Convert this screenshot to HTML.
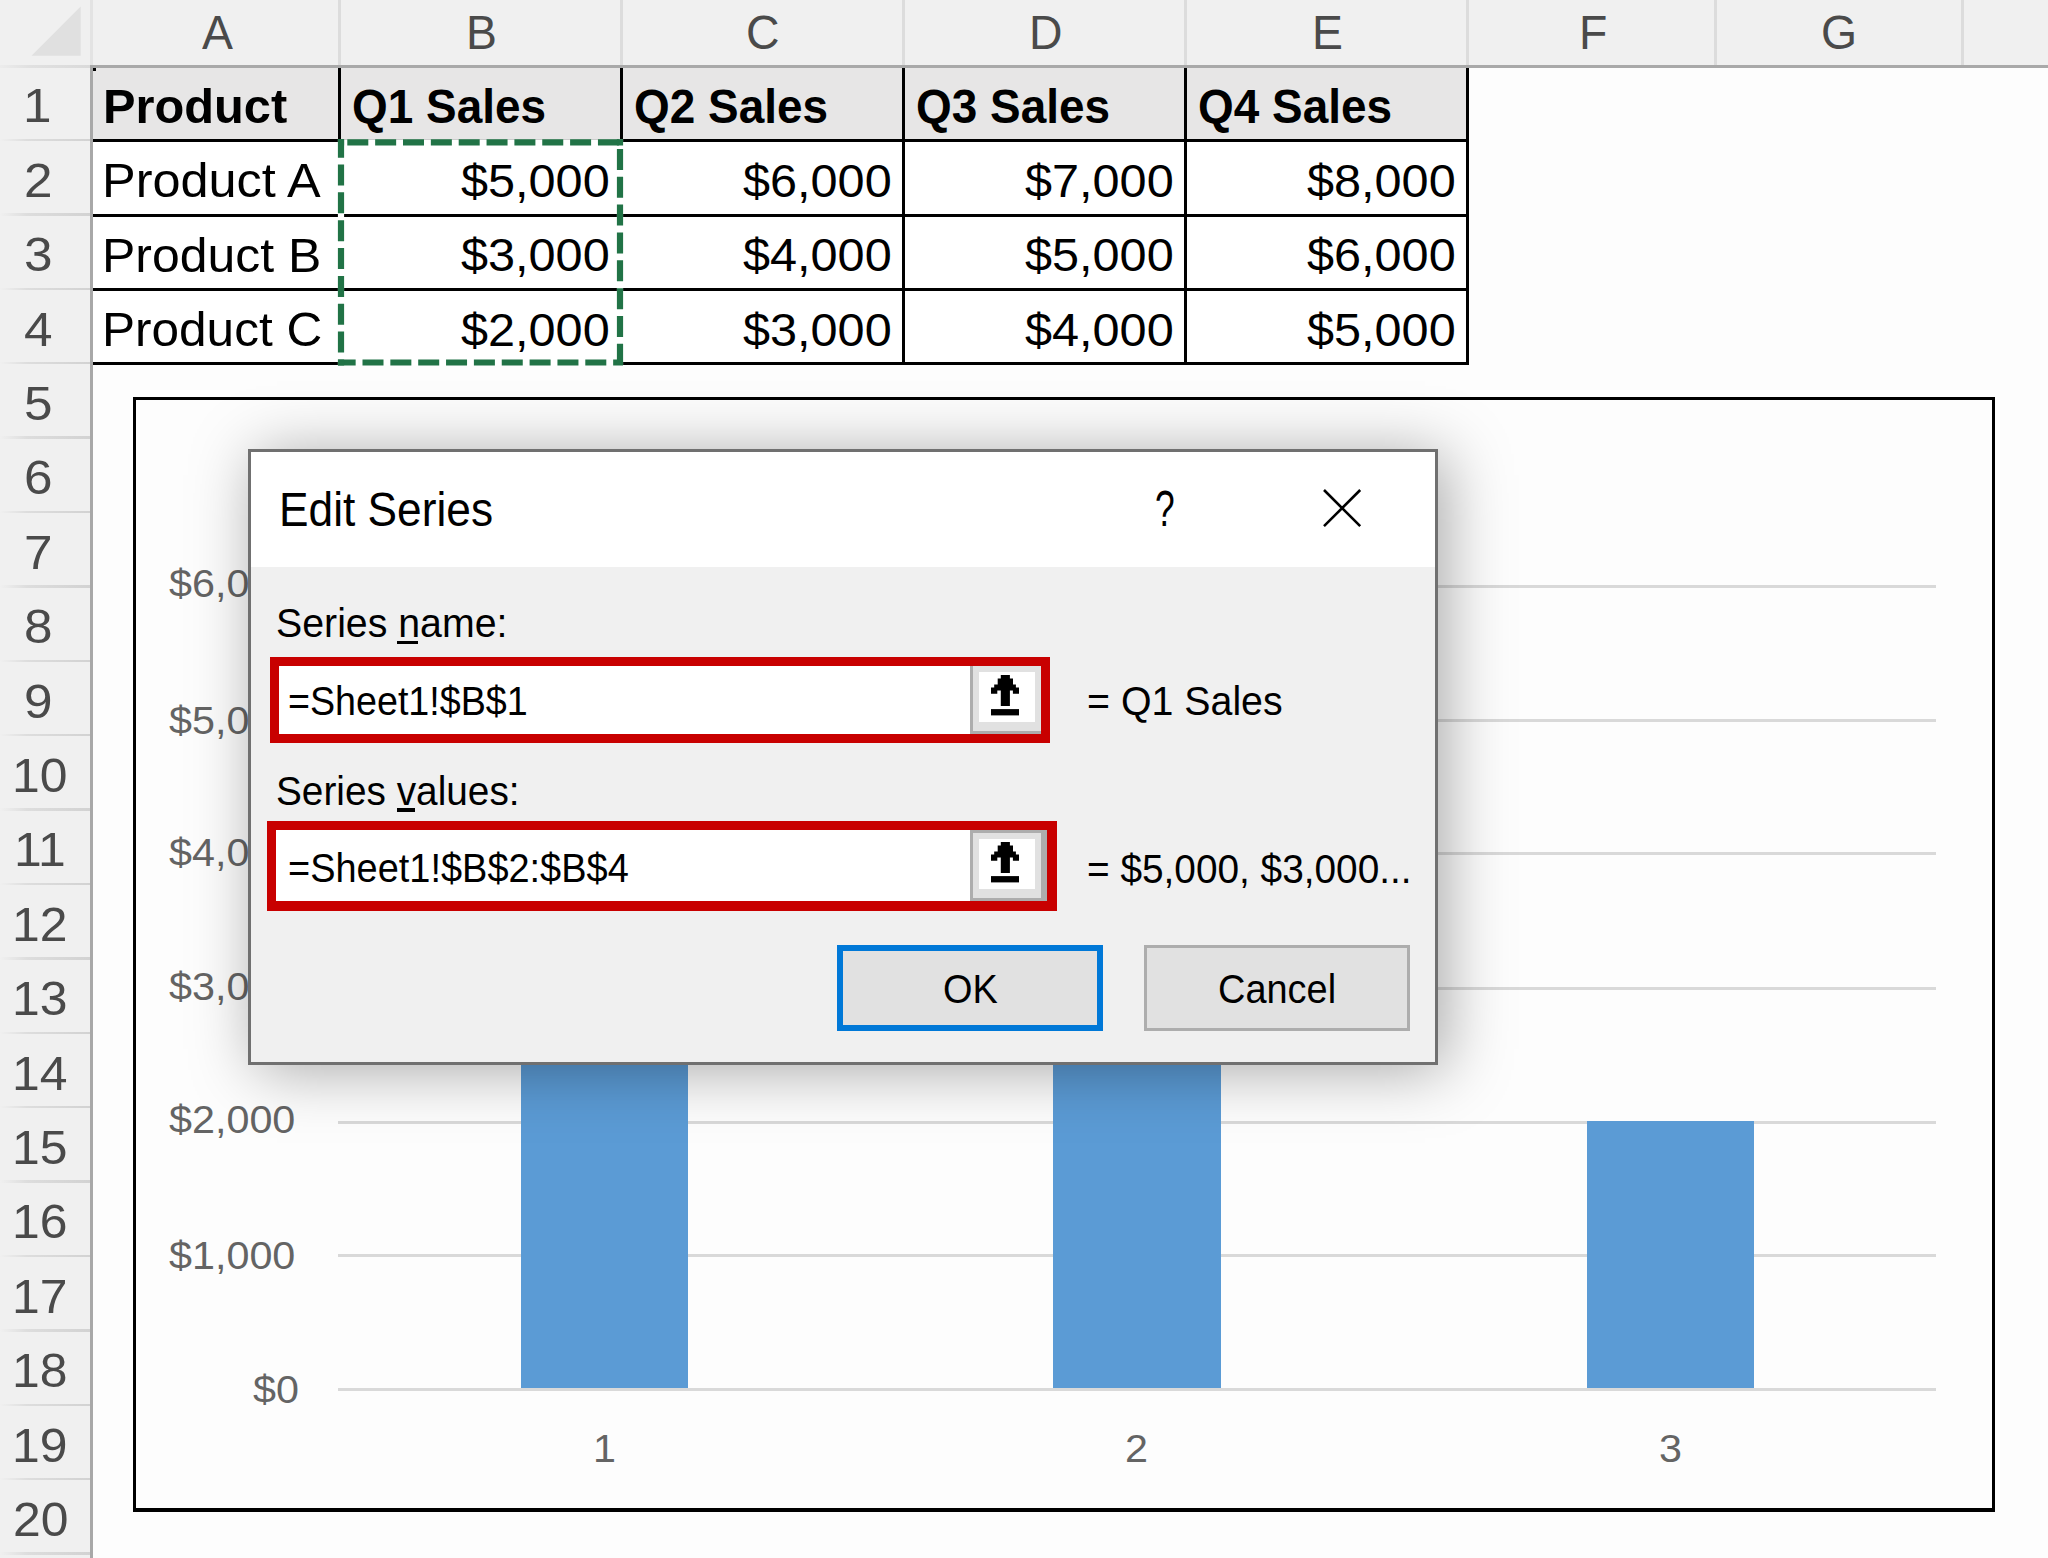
<!DOCTYPE html>
<html><head><meta charset="utf-8"><title>Edit Series</title>
<style>
html,body{margin:0;padding:0;}
body{width:2048px;height:1558px;position:relative;overflow:hidden;background:#fdfdfd;font-family:"Liberation Sans",sans-serif;}
div,span,svg{position:absolute;box-sizing:content-box;}
span{line-height:1;white-space:pre;transform-origin:0 0;}
#dlg{left:248px;top:449px;width:1189.7px;height:616px;background:#707070;overflow:hidden;}
#dlgshadow{left:248px;top:449px;width:1189.7px;height:616px;box-shadow:8px 5px 60px rgba(0,0,0,0.34);}
#chartclip{left:136.5px;top:400px;width:1855.5px;height:1108.5px;overflow:hidden;}
</style></head><body>
<div style="left:0.00px;top:0.00px;width:2048.00px;height:67.00px;background:#f0f0f0;"></div>
<div style="left:0.00px;top:0.00px;width:91.00px;height:1558.00px;background:#f0f0f0;"></div>
<svg style="left:0;top:0" width="92" height="66"><polygon points="80.7,6.5 80.7,55.7 31.5,55.7" fill="#e0e0e0"/></svg>
<div style="left:338.30px;top:0.00px;width:2.40px;height:66.00px;background:#dcdcdc;"></div>
<div style="left:620.30px;top:0.00px;width:2.40px;height:66.00px;background:#dcdcdc;"></div>
<div style="left:902.30px;top:0.00px;width:2.40px;height:66.00px;background:#dcdcdc;"></div>
<div style="left:1184.30px;top:0.00px;width:2.40px;height:66.00px;background:#dcdcdc;"></div>
<div style="left:1466.30px;top:0.00px;width:2.40px;height:66.00px;background:#dcdcdc;"></div>
<div style="left:1714.30px;top:0.00px;width:2.40px;height:66.00px;background:#dcdcdc;"></div>
<div style="left:1961.30px;top:0.00px;width:2.40px;height:66.00px;background:#dcdcdc;"></div>
<div style="left:90.00px;top:0.00px;width:2.90px;height:65.00px;background:#e3e3e3;"></div>
<div style="left:0.00px;top:138.70px;width:90.00px;height:2.60px;background:linear-gradient(90deg,#f0f0f0 0%,#dddddd 30%,#d2d2d2 100%);"></div>
<div style="left:0.00px;top:213.10px;width:90.00px;height:2.60px;background:linear-gradient(90deg,#f0f0f0 0%,#dddddd 30%,#d2d2d2 100%);"></div>
<div style="left:0.00px;top:287.50px;width:90.00px;height:2.60px;background:linear-gradient(90deg,#f0f0f0 0%,#dddddd 30%,#d2d2d2 100%);"></div>
<div style="left:0.00px;top:361.90px;width:90.00px;height:2.60px;background:linear-gradient(90deg,#f0f0f0 0%,#dddddd 30%,#d2d2d2 100%);"></div>
<div style="left:0.00px;top:436.30px;width:90.00px;height:2.60px;background:linear-gradient(90deg,#f0f0f0 0%,#dddddd 30%,#d2d2d2 100%);"></div>
<div style="left:0.00px;top:510.70px;width:90.00px;height:2.60px;background:linear-gradient(90deg,#f0f0f0 0%,#dddddd 30%,#d2d2d2 100%);"></div>
<div style="left:0.00px;top:585.10px;width:90.00px;height:2.60px;background:linear-gradient(90deg,#f0f0f0 0%,#dddddd 30%,#d2d2d2 100%);"></div>
<div style="left:0.00px;top:659.50px;width:90.00px;height:2.60px;background:linear-gradient(90deg,#f0f0f0 0%,#dddddd 30%,#d2d2d2 100%);"></div>
<div style="left:0.00px;top:733.90px;width:90.00px;height:2.60px;background:linear-gradient(90deg,#f0f0f0 0%,#dddddd 30%,#d2d2d2 100%);"></div>
<div style="left:0.00px;top:808.30px;width:90.00px;height:2.60px;background:linear-gradient(90deg,#f0f0f0 0%,#dddddd 30%,#d2d2d2 100%);"></div>
<div style="left:0.00px;top:882.70px;width:90.00px;height:2.60px;background:linear-gradient(90deg,#f0f0f0 0%,#dddddd 30%,#d2d2d2 100%);"></div>
<div style="left:0.00px;top:957.10px;width:90.00px;height:2.60px;background:linear-gradient(90deg,#f0f0f0 0%,#dddddd 30%,#d2d2d2 100%);"></div>
<div style="left:0.00px;top:1031.50px;width:90.00px;height:2.60px;background:linear-gradient(90deg,#f0f0f0 0%,#dddddd 30%,#d2d2d2 100%);"></div>
<div style="left:0.00px;top:1105.90px;width:90.00px;height:2.60px;background:linear-gradient(90deg,#f0f0f0 0%,#dddddd 30%,#d2d2d2 100%);"></div>
<div style="left:0.00px;top:1180.30px;width:90.00px;height:2.60px;background:linear-gradient(90deg,#f0f0f0 0%,#dddddd 30%,#d2d2d2 100%);"></div>
<div style="left:0.00px;top:1254.70px;width:90.00px;height:2.60px;background:linear-gradient(90deg,#f0f0f0 0%,#dddddd 30%,#d2d2d2 100%);"></div>
<div style="left:0.00px;top:1329.10px;width:90.00px;height:2.60px;background:linear-gradient(90deg,#f0f0f0 0%,#dddddd 30%,#d2d2d2 100%);"></div>
<div style="left:0.00px;top:1403.50px;width:90.00px;height:2.60px;background:linear-gradient(90deg,#f0f0f0 0%,#dddddd 30%,#d2d2d2 100%);"></div>
<div style="left:0.00px;top:1477.90px;width:90.00px;height:2.60px;background:linear-gradient(90deg,#f0f0f0 0%,#dddddd 30%,#d2d2d2 100%);"></div>
<div style="left:0.00px;top:1552.30px;width:90.00px;height:2.60px;background:linear-gradient(90deg,#f0f0f0 0%,#dddddd 30%,#d2d2d2 100%);"></div>
<div style="left:0.00px;top:65.40px;width:2048.00px;height:2.70px;background:linear-gradient(90deg,#ececec 0px,#e0e0e0 30px,#dadada 89.9px,#a9a9a9 90px);"></div>
<div style="left:90.00px;top:66.00px;width:3.00px;height:1492.00px;background:#a8a8a8;"></div>
<div style="left:93.00px;top:68.00px;width:1374.00px;height:71.50px;background:#e7e6e6;"></div>
<div style="left:93.00px;top:139.50px;width:1374.00px;height:224.00px;background:#fff;"></div>
<div style="left:93.00px;top:68.00px;width:3.00px;height:3.00px;background:#000;"></div>
<div style="left:338.00px;top:68.00px;width:3.00px;height:297.00px;background:#000;"></div>
<div style="left:620.00px;top:68.00px;width:3.00px;height:297.00px;background:#000;"></div>
<div style="left:902.00px;top:68.00px;width:3.00px;height:297.00px;background:#000;"></div>
<div style="left:1184.00px;top:68.00px;width:3.00px;height:297.00px;background:#000;"></div>
<div style="left:1466.00px;top:68.00px;width:3.00px;height:297.00px;background:#000;"></div>
<div style="left:93.00px;top:139.00px;width:1376.00px;height:3.00px;background:#000;"></div>
<div style="left:93.00px;top:213.50px;width:1376.00px;height:3.00px;background:#000;"></div>
<div style="left:93.00px;top:288.00px;width:1376.00px;height:3.00px;background:#000;"></div>
<div style="left:93.00px;top:362.00px;width:1376.00px;height:3.00px;background:#000;"></div>
<svg style="left:0;top:0" width="700" height="400">
<rect x="341" y="142.3" width="279" height="220.2" fill="none" stroke="#fff" stroke-width="6.2"/>
<g stroke="#217346" stroke-width="6.2" fill="none">
<line x1="338" y1="142.3" x2="344.1" y2="142.3"/>
<line x1="347.3" y1="142.3" x2="623" y2="142.3" stroke-dasharray="21 6.85"/>
<line x1="338" y1="362.5" x2="623" y2="362.5" stroke-dasharray="21 6.85" stroke-dashoffset="3.35"/>
<line x1="341" y1="139.2" x2="341" y2="365.6" stroke-dasharray="21 6.85" stroke-dashoffset="2.55"/>
<line x1="620" y1="139.2" x2="620" y2="145.5"/>
<line x1="620" y1="148.9" x2="620" y2="365.6" stroke-dasharray="21 6.85"/>
</g></svg>
<div style="left:133.20px;top:396.50px;width:1862.10px;height:1115.00px;background:#000;"></div>
<div style="left:136.40px;top:399.70px;width:1855.70px;height:1108.60px;background:#fdfdfd;"></div>
<div style="left:338.00px;top:585.40px;width:1598.00px;height:3.00px;background:#d9d9d9;"></div>
<div style="left:338.00px;top:718.80px;width:1598.00px;height:3.00px;background:#d9d9d9;"></div>
<div style="left:338.00px;top:851.90px;width:1598.00px;height:3.00px;background:#d9d9d9;"></div>
<div style="left:338.00px;top:987.40px;width:1598.00px;height:3.00px;background:#d9d9d9;"></div>
<div style="left:338.00px;top:1121.20px;width:1598.00px;height:3.00px;background:#d9d9d9;"></div>
<div style="left:338.00px;top:1254.20px;width:1598.00px;height:3.00px;background:#d9d9d9;"></div>
<div style="left:338.00px;top:1387.60px;width:1598.00px;height:3.00px;background:#d9d9d9;"></div>
<div style="left:520.60px;top:720.30px;width:167.40px;height:667.30px;background:#5b9bd5;"></div>
<div style="left:1053.30px;top:988.90px;width:167.40px;height:398.70px;background:#5b9bd5;"></div>
<div style="left:1586.50px;top:1121.00px;width:167.40px;height:266.60px;background:#5b9bd5;"></div>
<span style="left:169.09px;top:564.49px;font-size:39px;font-weight:400;color:#646464;transform:scaleX(1.0589);">$6,000</span>
<span style="left:169.09px;top:700.59px;font-size:39px;font-weight:400;color:#646464;transform:scaleX(1.0589);">$5,000</span>
<span style="left:169.09px;top:833.49px;font-size:39px;font-weight:400;color:#646464;transform:scaleX(1.0589);">$4,000</span>
<span style="left:169.09px;top:966.99px;font-size:39px;font-weight:400;color:#646464;transform:scaleX(1.0589);">$3,000</span>
<span style="left:169.09px;top:1100.19px;font-size:39px;font-weight:400;color:#646464;transform:scaleX(1.0589);">$2,000</span>
<span style="left:169.09px;top:1236.39px;font-size:39px;font-weight:400;color:#646464;transform:scaleX(1.0589);">$1,000</span>
<span style="left:252.81px;top:1369.59px;font-size:39px;font-weight:400;color:#646464;transform:scaleX(1.0589);">$0</span>
<span style="left:593.12px;top:1428.99px;font-size:39px;font-weight:400;color:#646464;transform:scaleX(1.0589);">1</span>
<span style="left:1125.44px;top:1428.99px;font-size:39px;font-weight:400;color:#646464;transform:scaleX(1.0589);">2</span>
<span style="left:1658.64px;top:1428.99px;font-size:39px;font-weight:400;color:#646464;transform:scaleX(1.0589);">3</span>
<span style="left:202.00px;top:7.89px;font-size:48.8px;font-weight:400;color:#4a4a4a;transform:scaleX(0.9500);">A</span>
<span style="left:465.61px;top:7.89px;font-size:48.8px;font-weight:400;color:#4a4a4a;transform:scaleX(0.9500);">B</span>
<span style="left:746.08px;top:7.89px;font-size:48.8px;font-weight:400;color:#4a4a4a;transform:scaleX(0.9500);">C</span>
<span style="left:1028.62px;top:7.89px;font-size:48.8px;font-weight:400;color:#4a4a4a;transform:scaleX(0.9500);">D</span>
<span style="left:1311.77px;top:7.89px;font-size:48.8px;font-weight:400;color:#4a4a4a;transform:scaleX(0.9500);">E</span>
<span style="left:1578.93px;top:7.89px;font-size:48.8px;font-weight:400;color:#4a4a4a;transform:scaleX(0.9500);">F</span>
<span style="left:1821.12px;top:7.89px;font-size:48.8px;font-weight:400;color:#4a4a4a;transform:scaleX(0.9500);">G</span>
<span style="left:23.47px;top:82.39px;font-size:47.5px;font-weight:400;color:#4a4a4a;transform:scaleX(1.0800);">1</span>
<span style="left:24.24px;top:156.79px;font-size:47.5px;font-weight:400;color:#4a4a4a;transform:scaleX(1.0800);">2</span>
<span style="left:24.49px;top:231.19px;font-size:47.5px;font-weight:400;color:#4a4a4a;transform:scaleX(1.0800);">3</span>
<span style="left:24.49px;top:305.59px;font-size:47.5px;font-weight:400;color:#4a4a4a;transform:scaleX(1.0800);">4</span>
<span style="left:24.49px;top:379.99px;font-size:47.5px;font-weight:400;color:#4a4a4a;transform:scaleX(1.0800);">5</span>
<span style="left:24.24px;top:454.39px;font-size:47.5px;font-weight:400;color:#4a4a4a;transform:scaleX(1.0800);">6</span>
<span style="left:24.24px;top:528.79px;font-size:47.5px;font-weight:400;color:#4a4a4a;transform:scaleX(1.0800);">7</span>
<span style="left:24.49px;top:603.19px;font-size:47.5px;font-weight:400;color:#4a4a4a;transform:scaleX(1.0800);">8</span>
<span style="left:24.24px;top:677.59px;font-size:47.5px;font-weight:400;color:#4a4a4a;transform:scaleX(1.0800);">9</span>
<span style="left:12.12px;top:751.99px;font-size:47.5px;font-weight:400;color:#4a4a4a;transform:scaleX(1.0500);">10</span>
<span style="left:14.12px;top:826.39px;font-size:47.5px;font-weight:400;color:#4a4a4a;transform:scaleX(1.0500);">11</span>
<span style="left:12.37px;top:900.79px;font-size:47.5px;font-weight:400;color:#4a4a4a;transform:scaleX(1.0500);">12</span>
<span style="left:12.12px;top:975.19px;font-size:47.5px;font-weight:400;color:#4a4a4a;transform:scaleX(1.0500);">13</span>
<span style="left:11.87px;top:1049.59px;font-size:47.5px;font-weight:400;color:#4a4a4a;transform:scaleX(1.0500);">14</span>
<span style="left:12.12px;top:1123.99px;font-size:47.5px;font-weight:400;color:#4a4a4a;transform:scaleX(1.0500);">15</span>
<span style="left:12.12px;top:1198.39px;font-size:47.5px;font-weight:400;color:#4a4a4a;transform:scaleX(1.0500);">16</span>
<span style="left:12.37px;top:1272.79px;font-size:47.5px;font-weight:400;color:#4a4a4a;transform:scaleX(1.0500);">17</span>
<span style="left:12.12px;top:1347.19px;font-size:47.5px;font-weight:400;color:#4a4a4a;transform:scaleX(1.0500);">18</span>
<span style="left:12.37px;top:1421.59px;font-size:47.5px;font-weight:400;color:#4a4a4a;transform:scaleX(1.0500);">19</span>
<span style="left:12.87px;top:1495.99px;font-size:47.5px;font-weight:400;color:#4a4a4a;transform:scaleX(1.0500);">20</span>
<span style="left:102.89px;top:82.09px;font-size:48.8px;font-weight:700;color:#000;transform:scaleX(0.9991);">Product</span>
<span style="left:351.76px;top:82.09px;font-size:48.8px;font-weight:700;color:#000;transform:scaleX(0.9409);">Q1 Sales</span>
<span style="left:633.76px;top:82.09px;font-size:48.8px;font-weight:700;color:#000;transform:scaleX(0.9409);">Q2 Sales</span>
<span style="left:915.76px;top:82.09px;font-size:48.8px;font-weight:700;color:#000;transform:scaleX(0.9409);">Q3 Sales</span>
<span style="left:1197.76px;top:82.09px;font-size:48.8px;font-weight:700;color:#000;transform:scaleX(0.9409);">Q4 Sales</span>
<span style="left:102.26px;top:156.27px;font-size:49px;font-weight:400;color:#000;transform:scaleX(1.0295);">Product A</span>
<span style="left:460.91px;top:158.13px;font-size:46.8px;font-weight:400;color:#000;transform:scaleX(1.0386);">$5,000</span>
<span style="left:742.91px;top:158.13px;font-size:46.8px;font-weight:400;color:#000;transform:scaleX(1.0386);">$6,000</span>
<span style="left:1024.91px;top:158.13px;font-size:46.8px;font-weight:400;color:#000;transform:scaleX(1.0386);">$7,000</span>
<span style="left:1306.91px;top:158.13px;font-size:46.8px;font-weight:400;color:#000;transform:scaleX(1.0386);">$8,000</span>
<span style="left:102.31px;top:230.62px;font-size:49px;font-weight:400;color:#000;transform:scaleX(1.0190);">Product B</span>
<span style="left:460.91px;top:232.48px;font-size:46.8px;font-weight:400;color:#000;transform:scaleX(1.0386);">$3,000</span>
<span style="left:742.91px;top:232.48px;font-size:46.8px;font-weight:400;color:#000;transform:scaleX(1.0386);">$4,000</span>
<span style="left:1024.91px;top:232.48px;font-size:46.8px;font-weight:400;color:#000;transform:scaleX(1.0386);">$5,000</span>
<span style="left:1306.91px;top:232.48px;font-size:46.8px;font-weight:400;color:#000;transform:scaleX(1.0386);">$6,000</span>
<span style="left:102.34px;top:304.97px;font-size:49px;font-weight:400;color:#000;transform:scaleX(1.0105);">Product C</span>
<span style="left:460.91px;top:306.83px;font-size:46.8px;font-weight:400;color:#000;transform:scaleX(1.0386);">$2,000</span>
<span style="left:742.91px;top:306.83px;font-size:46.8px;font-weight:400;color:#000;transform:scaleX(1.0386);">$3,000</span>
<span style="left:1024.91px;top:306.83px;font-size:46.8px;font-weight:400;color:#000;transform:scaleX(1.0386);">$4,000</span>
<span style="left:1306.91px;top:306.83px;font-size:46.8px;font-weight:400;color:#000;transform:scaleX(1.0386);">$5,000</span>
<div id="dlgshadow"></div>
<div id="dlg">
<div style="left:3.00px;top:3.00px;width:1183.70px;height:115.00px;background:#fff;"></div>
<div style="left:3.00px;top:118.00px;width:1183.70px;height:495.00px;background:#f0f0f0;"></div>
<svg style="left:1072.70px;top:38.20px" width="42" height="42"><path d="M3,3 L39.2,39.2 M39.2,3 L3,39.2" stroke="#000" stroke-width="2.6" fill="none"/></svg>
<div style="left:21.80px;top:207.60px;width:780.40px;height:86.50px;background:#c80000;"></div>
<div style="left:31.10px;top:216.90px;width:761.80px;height:67.90px;background:#fff;"></div>
<div style="left:18.60px;top:372.00px;width:790.10px;height:89.50px;background:#c80000;"></div>
<div style="left:27.90px;top:381.30px;width:771.50px;height:70.90px;background:#fff;"></div>
<div style="left:722.10px;top:217.00px;width:70.90px;height:68.00px;background:#adadad;"></div>
<div style="left:724.90px;top:217.00px;width:68.10px;height:65.30px;background:#e1e1e1;"></div>
<div style="left:730.90px;top:222.70px;width:56.20px;height:50.30px;background:#fff;"></div>
<svg style="left:743.30px;top:226.00px" width="30" height="42"><path d="M9.8,0.0 L18.9,0.0 L18.9,3.4 L22.0,3.4 L22.0,9.4 L24.9,9.4 L24.9,12.6 L28.0,12.6 L28.0,18.7 L21.9,18.7 L21.9,15.5 L18.9,15.5 L18.9,30.9 L9.8,30.9 L9.8,15.5 L6.3,15.5 L6.3,18.7 L0.0,18.7 L0.0,12.6 L3.2,12.6 L3.2,9.4 L6.7,9.4 L6.7,3.4 L9.8,3.4 Z" fill="#000"/><rect x="0" y="34.1" width="28" height="6.3" fill="#000"/></svg>
<div style="left:722.10px;top:381.20px;width:77.00px;height:71.30px;background:#adadad;"></div>
<div style="left:725.00px;top:384.30px;width:68.10px;height:64.70px;background:#e1e1e1;"></div>
<div style="left:730.90px;top:389.90px;width:56.20px;height:50.20px;background:#fff;"></div>
<svg style="left:743.30px;top:393.20px" width="30" height="42"><path d="M9.8,0.0 L18.9,0.0 L18.9,3.4 L22.0,3.4 L22.0,9.4 L24.9,9.4 L24.9,12.6 L28.0,12.6 L28.0,18.7 L21.9,18.7 L21.9,15.5 L18.9,15.5 L18.9,30.9 L9.8,30.9 L9.8,15.5 L6.3,15.5 L6.3,18.7 L0.0,18.7 L0.0,12.6 L3.2,12.6 L3.2,9.4 L6.7,9.4 L6.7,3.4 L9.8,3.4 Z" fill="#000"/><rect x="0" y="34.1" width="28" height="6.3" fill="#000"/></svg>
<div style="left:588.50px;top:495.80px;width:254.30px;height:74.30px;border:6px solid #0078d7;background:#e1e1e1"></div>
<div style="left:895.60px;top:495.80px;width:260.30px;height:80.30px;border:3px solid #adadad;background:#e1e1e1"></div>
<div style="left:148.80px;top:192.00px;width:21.20px;height:3.00px;background:#000;"></div>
<div style="left:148.50px;top:359.40px;width:18.50px;height:3.20px;background:#000;"></div>
<span style="left:31.26px;top:36.79px;font-size:47.5px;font-weight:400;color:#000;transform:scaleX(0.9318);">Edit Series</span>
<span style="left:907.08px;top:34.97px;font-size:50px;font-weight:400;color:#000;transform:scaleX(0.7083);">?</span>
<span style="left:27.84px;top:154.42px;font-size:40.5px;font-weight:400;color:#000;transform:scaleX(0.9700);">Series name:</span>
<span style="left:39.82px;top:231.72px;font-size:40.5px;font-weight:400;color:#000;transform:scaleX(0.9294);">=Sheet1!$B$1</span>
<span style="left:839.13px;top:232.12px;font-size:40.5px;font-weight:400;color:#000;transform:scaleX(0.9710);">= Q1 Sales</span>
<span style="left:28.26px;top:321.62px;font-size:40.5px;font-weight:400;color:#000;transform:scaleX(0.9575);">Series values:</span>
<span style="left:40.00px;top:398.72px;font-size:40.5px;font-weight:400;color:#000;transform:scaleX(0.9369);">=Sheet1!$B$2:$B$4</span>
<span style="left:839.16px;top:399.62px;font-size:40.5px;font-weight:400;color:#000;transform:scaleX(0.9577);">= $5,000, $3,000...</span>
<span style="left:694.71px;top:519.62px;font-size:40.5px;font-weight:400;color:#000;transform:scaleX(0.9358);">OK</span>
<span style="left:970.20px;top:519.62px;font-size:40.5px;font-weight:400;color:#000;transform:scaleX(0.9366);">Cancel</span>
</div>
</body></html>
